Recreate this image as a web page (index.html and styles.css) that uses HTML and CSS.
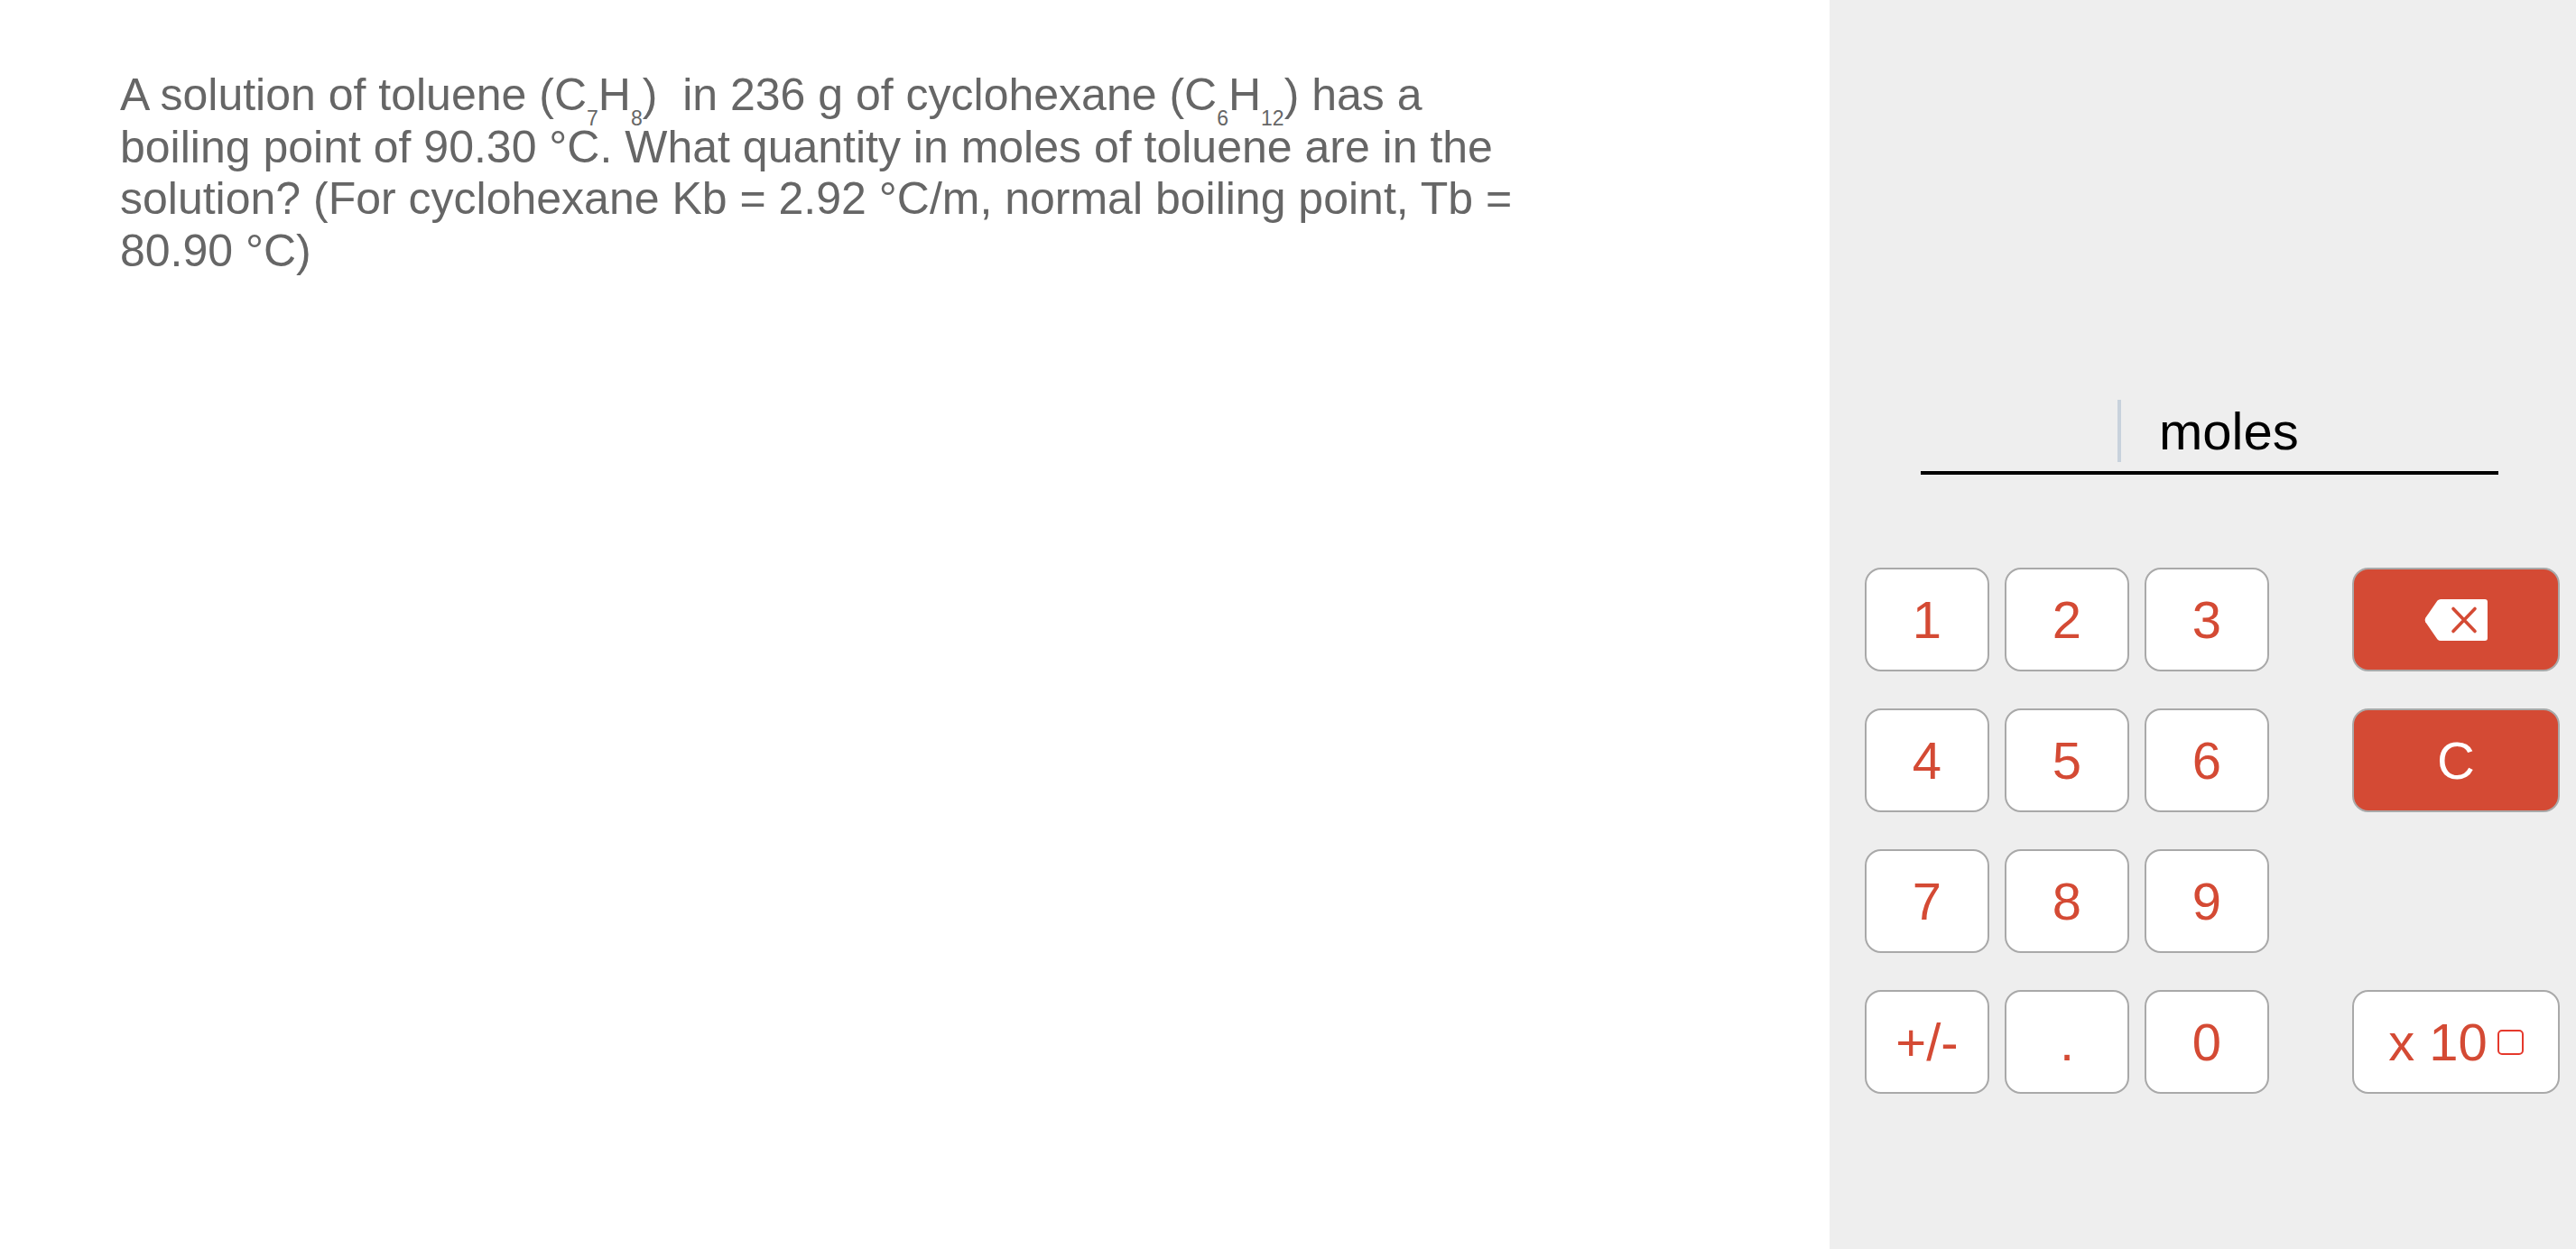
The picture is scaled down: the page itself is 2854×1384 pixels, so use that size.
FILE: index.html
```html
<!DOCTYPE html>
<html lang="en">
<head>
<meta charset="utf-8">
<title>Question</title>
<link rel="stylesheet" href="styles.css">
</head>
<body>
<main class="question-pane">
  <p class="question">A solution of toluene (C<sub class="sub">7</sub>H<sub class="sub">8</sub>)&nbsp; in 236 g of cyclohexane (C<sub class="sub">6</sub>H<sub class="sub">12</sub>) has a boiling point of 90.30 °C. What quantity in moles of toluene are in the solution? (For cyclohexane Kb = 2.92 °C/m, normal boiling point, Tb = 80.90 °C)</p>
</main>
<aside class="answer-pane">
  <div class="answer-row">
    <div class="answer-input"></div>
    <div class="unit">moles</div>
  </div>
  <div class="keypad">
    <div class="digits">
      <button class="key">1</button>
      <button class="key">2</button>
      <button class="key">3</button>
      <button class="key">4</button>
      <button class="key">5</button>
      <button class="key">6</button>
      <button class="key">7</button>
      <button class="key">8</button>
      <button class="key">9</button>
      <button class="key">+/-</button>
      <button class="key">.</button>
      <button class="key">0</button>
    </div>
    <div class="functions">
      <button class="key key-red" aria-label="backspace">
        <svg class="bksp" width="70" height="46" viewBox="0 0 70 46">
          <path d="M18 0 H67 Q70 0 70 3 V43 Q70 46 67 46 H18 Q16 46 14.5 44.5 L1.2 25.3 Q0 23 1.2 20.7 L14.5 1.5 Q16 0 18 0 Z" fill="#ffffff"/>
          <path d="M32 10.5 L56 35.5 M56 10.5 L32 35.5" stroke="#d44a34" stroke-width="3.6" stroke-linecap="round" fill="none"/>
        </svg>
      </button>
      <button class="key key-red">C</button>
      <button class="key key-exp"><span class="x10">x 10</span><span class="exp-box"></span></button>
    </div>
  </div>
</aside>
</body>
</html>
```
FILE: styles.css
```css
html, body {
  margin: 0;
  padding: 0;
}

body {
  display: flex;
  height: 1384px;
  overflow: hidden;
  font-family: "Liberation Sans", Arial, sans-serif;
}

.question-pane {
  flex: 0 0 2027px;
  box-sizing: border-box;
  background: #ffffff;
  padding: 77px 0 0 133px;
}

.question {
  width: 1570px;
  margin: 0;
  font-size: 50px;
  line-height: 57.5px;
  color: #666666;
}

.sub {
  font-size: 23px;
  line-height: 0;
  vertical-align: -17px;
}

.answer-pane {
  flex: 1 1 auto;
  box-sizing: border-box;
  background: #eeeeee;
  padding: 438px 18px 0 39px;
}

.answer-row {
  display: flex;
  width: 640px;
  height: 88px;
  box-sizing: border-box;
  padding-top: 5px;
  margin-left: 62px;
  border-bottom: 4px solid #000000;
}

.answer-input {
  width: 222px;
  height: 69px;
  box-sizing: border-box;
  border-right: 4px solid #c8d2dc;
}

.unit {
  margin-left: 42px;
  font-size: 58px;
  line-height: 69px;
  color: #000000;
}

.keypad {
  display: flex;
  gap: 92px;
  margin-top: 103px;
}

.digits {
  display: grid;
  grid-template-columns: repeat(3, 138px);
  grid-auto-rows: 115px;
  column-gap: 17px;
  row-gap: 41px;
}

.functions {
  display: grid;
  grid-template-columns: 230px;
  grid-template-rows: repeat(4, 115px);
  row-gap: 41px;
}

.key {
  box-sizing: border-box;
  margin: 0;
  padding: 0;
  border: 2px solid #a9a9a9;
  border-radius: 18px;
  background: #ffffff;
  color: #d44a34;
  font-family: "Liberation Sans", Arial, sans-serif;
  font-size: 58px;
  display: flex;
  align-items: center;
  justify-content: center;
}

.key-red {
  background: #d44a34;
  color: #ffffff;
}

.key-exp {
  grid-row: 4;
  line-height: 58px;
}

.bksp {
  display: block;
}

.exp-box {
  display: inline-block;
  width: 29px;
  height: 28px;
  box-sizing: border-box;
  margin-left: 11px;
  border: 2px solid #e5392c;
  border-radius: 5px;
  vertical-align: 11px;
}
```
